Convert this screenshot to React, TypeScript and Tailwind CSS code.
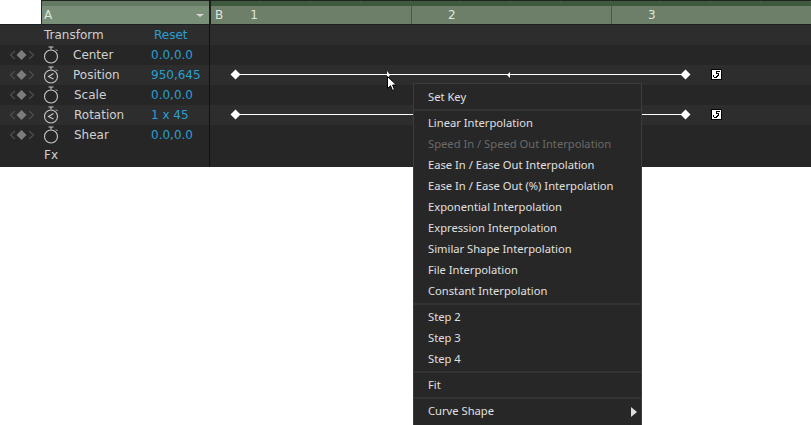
const ROWS = [
  { name: 'Center', value: '0.0,0.0', keyed: false, nameClass: 'pl-[14px]' },
  { name: 'Position', value: '950,645', keyed: true, nameClass: 'pl-[14px]' },
  { name: 'Scale', value: '0.0,0.0', keyed: false, nameClass: 'pl-[15px]' },
  { name: 'Rotation', value: '1 x 45', keyed: true, nameClass: 'pl-[15px]' },
  { name: 'Shear', value: '0.0,0.0', keyed: false, nameClass: 'pl-[15px]' },
];

const MENU = [
  ['Set Key'],
  ['Linear Interpolation', 'Speed In / Speed Out Interpolation', 'Ease In / Ease Out Interpolation', 'Ease In / Ease Out (%) Interpolation', 'Exponential Interpolation', 'Expression Interpolation', 'Similar Shape Interpolation', 'File Interpolation', 'Constant Interpolation'],
  ['Step 2', 'Step 3', 'Step 4'],
  ['Fit'],
];

function KeyNav() {
  return (
    <svg width="28" height="12" viewBox="0 0 28 12" className="shrink-0">
      <path d="M7 2 L2.5 6 L7 10" fill="none" stroke="#4d4d4d" strokeWidth="1.3" />
      <path d="M21 2 L25.5 6 L21 10" fill="none" stroke="#4d4d4d" strokeWidth="1.3" />
      <path d="M13.5 1 L18.5 6 L13.5 11 L8.5 6 Z" fill="#7d7d7d" />
    </svg>
  );
}

function Stopwatch({ keyed }: { keyed: boolean }) {
  return (
    <svg width="16" height="18" viewBox="0 0 16 18" className="shrink-0">
      <path d="M5.5 1 H10.5 M8 1 V3.5 M13 3.5 L14.5 5" fill="none" stroke="#c8c8c8" strokeWidth="1" />
      <circle cx="8" cy="10.5" r="6.5" fill="none" stroke="#c8c8c8" strokeWidth="1.1" />
      {keyed && <path d="M10.5 7.5 L5.5 10.5 L10.5 13" fill="none" stroke="#c8c8c8" strokeWidth="1.1" />}
    </svg>
  );
}

function Key({ x, y }: { x: number; y: number }) {
  return (
    <svg width="11" height="11" viewBox="0 0 11 11" className="absolute" style={{ left: x - 5, top: y - 5 }}>
      <path d="M5.5 0.5 L10.5 5.5 L5.5 10.5 L0.5 5.5 Z" fill="#fff" />
    </svg>
  );
}

function EndBadge({ x, y }: { x: number; y: number }) {
  return (
    <svg width="11" height="11" viewBox="0 0 11 11" shapeRendering="crispEdges" className="absolute" style={{ left: x, top: y }}>
      <rect x="0" y="0" width="11" height="11" fill="#000" />
      <rect x="1" y="1" width="9" height="9" fill="#fff" />
      <path d="M5 2 H9 V3 H6 V4 H8 V7 H7 V8 H6 V9 H3 V8 H2 V6 H3 V8 H5 V7 H6 V6 H7 V5 H5 Z" fill="#000" />
    </svg>
  );
}

export default function App() {
  return (
    <div className="relative h-[425px] w-[811px] overflow-hidden bg-white font-['DejaVu_Sans',sans-serif] text-[12px] text-[#d0d0d0]">
      {/* ── Top ruler ── */}
      <div className="flex h-[25px] border-b border-[#1b2024] bg-[#262626]">
        <div className="w-[41px] shrink-0 bg-white" />
        <div className="w-px shrink-0 bg-[#2a2a2a]" />
        <div className="flex w-[167px] shrink-0 flex-col border-t border-[#222]">
          <div className="h-[6px] bg-[#657a63]" />
          <div className="flex flex-1 items-center justify-between bg-[#7a8f78] pl-[2px] pr-[5px] text-[#dfe6dd]">
            <span>A</span>
            <span className="h-0 w-0 border-x-[4px] border-t-[3px] border-x-transparent border-t-[#d8d8d8]" />
          </div>
        </div>
        <div className="w-[2px] shrink-0 bg-[#1c1c1c]" />
        <div className="flex flex-1 flex-col border-t border-[#222]">
          <div className="flex h-[6px] bg-[#3e5a3e]">
            {[0, 1, 2, 3, 4, 5, 6, 7, 8, 9, 10, 11].map(i => (
              <div key={i} className="h-[1px] w-[50px] border-r border-[#5a6f5a]" />
            ))}
          </div>
          <div className="flex flex-1 items-center bg-[#6d7e69] text-[#dfe6dd]">
            <span className="w-[201px] border-r border-[#4b5a48] pl-[4px]">
              B<span className="ml-[27px]">1</span>
            </span>
            <span className="w-[200px] border-r border-[#4b5a48] pl-[36px]">2</span>
            <span className="pl-[36px]">3</span>
          </div>
        </div>
      </div>

      <div className="flex h-[142px]">
        {/* ── Property list ── */}
        <div className="w-[209px] shrink-0 bg-[#2d2d2d]">
          <div className="flex h-[20px] items-center pl-[44px]">
            <span className="w-[110px]">Transform</span>
            <span className="text-[#2b9fd0]">Reset</span>
          </div>
          {ROWS.map((r, i) => (
            <div key={r.name} className={`flex h-[20px] items-center ${i % 2 === 0 ? 'bg-[#262626]' : 'bg-[#2d2d2d]'}`}>
              <span className="ml-[8px]"><KeyNav /></span>
              <span className="ml-[7px]"><Stopwatch keyed={r.keyed} /></span>
              <span className={`w-[92px] ${r.nameClass}`}>{r.name}</span>
              <span className="text-[#2b9fd0]">{r.value}</span>
            </div>
          ))}
          <div className="flex h-[22px] items-center bg-[#262626] pb-[2px] pl-[44px]">Fx</div>
        </div>
        <div className="w-px shrink-0 bg-[#111]" />

        {/* ── Timeline ── */}
        <div className="relative flex-1 bg-[#2d2d2d]">
          <div className="h-[20px]" />
          {ROWS.map((r, i) => (
            <div key={r.name} className={`h-[20px] ${i % 2 === 0 ? 'bg-[#262626]' : 'bg-[#2d2d2d]'}`} />
          ))}
          <div className="h-[22px] bg-[#262626]" />

          <div className="absolute left-[25px] top-[49px] h-px w-[450px] bg-white" />
          <div className="absolute left-[25px] top-[89px] h-px w-[450px] bg-white" />
          <Key x={25} y={49} />
          <Key x={475} y={49} />
          <Key x={25} y={89} />
          <Key x={475} y={89} />
          <EndBadge x={501} y={44} />
          <EndBadge x={501} y={84} />
          <div className="absolute left-[297px] top-[47px] h-0 w-0 border-y-[3px] border-r-[3px] border-y-transparent border-r-white" />
          <div className="absolute left-[177px] top-[46px] h-0 w-0 border-y-[4px] border-l-[3px] border-y-transparent border-l-white" />
        </div>
      </div>

      {/* ── Mouse cursor ── */}
      <svg width="11" height="16" viewBox="0 0 11 16" className="absolute left-[387px] top-[76px]">
        <path d="M0.5 0.5 V12.5 L3.5 9.8 L5.5 14.5 L7.5 13.5 L5.6 9 L9.5 9 Z" fill="#fff" stroke="#000" strokeWidth="1" />
      </svg>

      {/* ── Context menu ── */}
      <div className="absolute left-[413px] top-[83px] w-[229px] border border-[#3c3c3c] bg-[#272727] py-[3px] font-['Noto_Sans',sans-serif] text-[11.2px] text-[#e0e0e0]">
        {MENU.map((group, gi) => (
          <div key={gi} className="mb-[2px] border-b-2 border-[#333] pb-[1px]">
            {group.map(label => (
              <div
                key={label}
                className={`flex h-[21px] items-center pl-[14px] ${label.startsWith('Speed') ? 'text-[#6a6a6a]' : ''}`}
              >
                {label}
              </div>
            ))}
          </div>
        ))}
        <div className="flex h-[21px] items-center justify-between pl-[14px] pr-[4px]">
          Curve Shape
          <span className="h-0 w-0 border-y-[5px] border-l-[6px] border-y-transparent border-l-[#dcdcdc]" />
        </div>
      </div>
    </div>
  );
}
